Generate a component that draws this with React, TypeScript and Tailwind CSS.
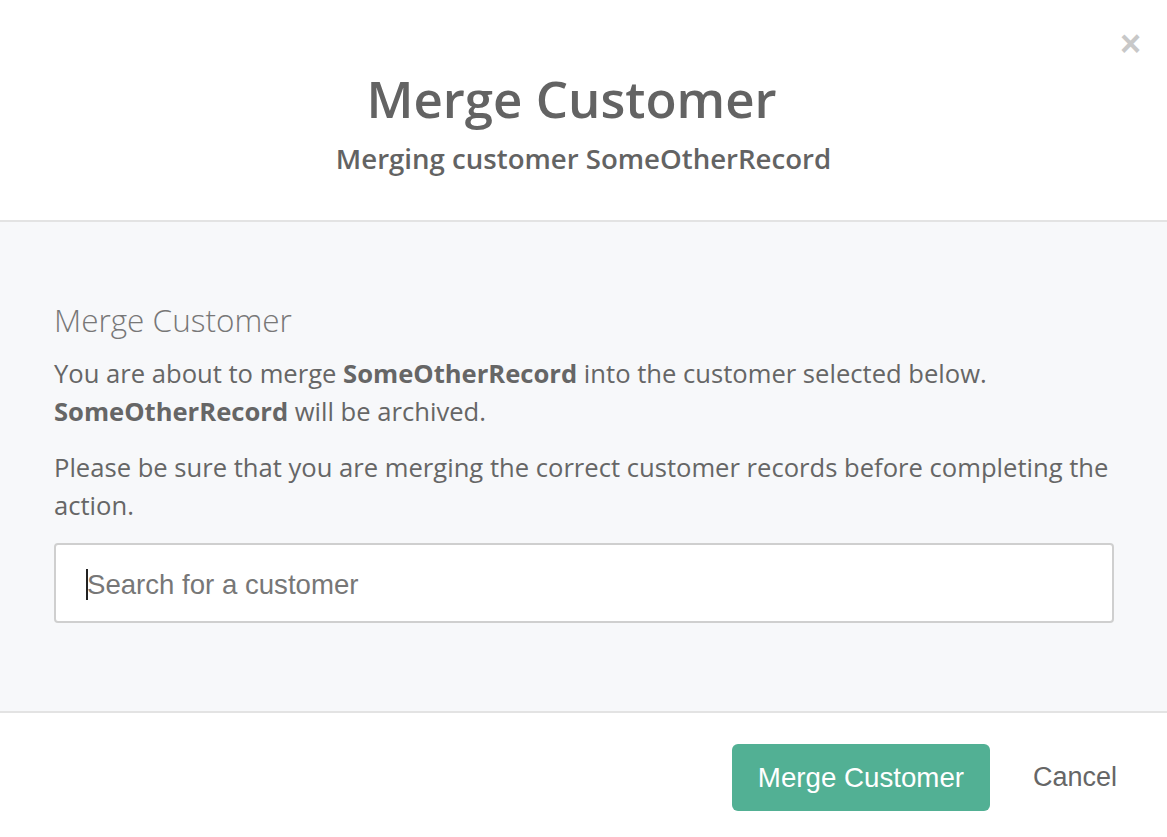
export default function App() {
  return (
    <div className="w-[1167px] h-[837px] bg-white flex flex-col overflow-hidden" style={{ fontFamily: '"Open Sans", sans-serif' }}>
      {/* Header */}
      <div className="relative h-[222px] border-b-2 border-[#e3e3e3] flex flex-col items-center pt-[62px]">
        <h1 className="text-[51px] leading-[72px] font-semibold text-[#636363] mr-[24px]">Merge Customer</h1>
        <h2 className="text-[27.6px] leading-[36px] font-semibold text-[#636363] mt-[6px]">Merging customer SomeOtherRecord</h2>
        <button className="absolute right-[26px] top-[26px] text-[#c8c8c8] text-[36px] leading-none font-bold" style={{ fontFamily: '"Liberation Sans", sans-serif' }}>
          ×
        </button>
      </div>

      {/* Body */}
      <div className="h-[491px] bg-[#f7f8fa] border-b-2 border-[#e3e3e3] px-[54px] pt-[76px]">
        <h3 className="text-[31.5px] leading-[44px] font-light text-[#777777]">Merge Customer</h3>
        <p className="mt-[13px] text-[25.6px] leading-[38px] text-[#666666]">
          You are about to merge <strong className="font-bold">SomeOtherRecord</strong> into the customer selected below.
          <br />
          <strong className="font-bold">SomeOtherRecord</strong> will be archived.
        </p>
        <p className="mt-[18px] text-[25.6px] leading-[38px] text-[#666666]">
          Please be sure that you are merging the correct customer records before completing the action.
        </p>
        <div className="mt-[18px] w-[1060px] h-[80px] bg-white border-2 border-[#cfcfcf] rounded-[4px] flex items-center pl-[30px] pt-[3px]">
          <span className="w-[2px] h-[31px] bg-[#222]" />
          <span className="text-[27.6px] text-[#777777] -ml-[1px]" style={{ fontFamily: '"Liberation Sans", sans-serif' }}>
            Search for a customer
          </span>
        </div>
      </div>

      {/* Footer */}
      <div className="flex-1 flex items-start justify-end pt-[31px] pr-[50px]" style={{ fontFamily: '"Liberation Sans", sans-serif' }}>
        <button className="w-[258px] h-[67px] rounded-[6px] bg-[#52b094] text-white text-[27.7px]">Merge Customer</button>
        <button className="ml-[43px] h-[67px] text-[27px] text-[#666666]">Cancel</button>
      </div>
    </div>
  );
}
